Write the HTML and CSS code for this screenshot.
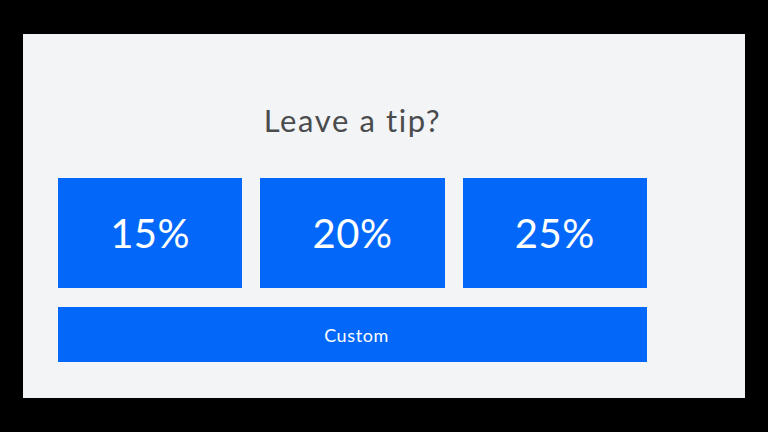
FILE: index.html
```html
<!DOCTYPE html>
<html lang="en">
<head>
    <meta charset="UTF-8">
    <meta name="viewport" content="width=device-width, initial-scale=1.0">
    <title>Leave a tip</title>
    <link rel="stylesheet" href="styles.css">
</head>
<body>
    <main class="tip-panel">
        <div class="tip-content">
            <h1 class="tip-title">Leave a tip?</h1>
            <div class="tip-grid">
                <button class="tip-button">15%</button>
                <button class="tip-button">20%</button>
                <button class="tip-button">25%</button>
                <button class="tip-button custom">Custom</button>
            </div>
        </div>
    </main>
</body>
</html>
```

FILE: styles.css
```css
* {
    margin: 0;
    padding: 0;
    box-sizing: border-box;
    font-family: Lato, 'Noto Sans', sans-serif;
}

body {
    background-color: #000;
    width: 768px;
    height: 432px;
    overflow: hidden;
    padding: 34px 23px 0 23px;
}

.tip-panel {
    width: 722px;
    height: 364px;
    background-color: #f2f4f6;
    padding: 66px 0 0 35px;
}

.tip-content {
    width: 589px;
    display: flex;
    flex-direction: column;
    align-items: center;
}

.tip-title {
    font-size: 31px;
    line-height: 40px;
    font-weight: 400;
    letter-spacing: 1.6px;
    font-variant-ligatures: none;
    color: #4a4b4d;
    margin-bottom: 38px;
}

.tip-grid {
    width: 100%;
    display: grid;
    grid-template-columns: repeat(3, 1fr);
    grid-template-rows: 110px 55px;
    gap: 19px 18px;
}

.tip-button {
    border: none;
    background-color: #0368fa;
    color: #fff;
    font-size: 40px;
    font-weight: 400;
    letter-spacing: 0.5px;
    cursor: pointer;
}

.tip-button.custom {
    grid-column: 1 / -1;
    font-size: 18px;
    letter-spacing: 0.6px;
    padding-left: 8px;
}
```
